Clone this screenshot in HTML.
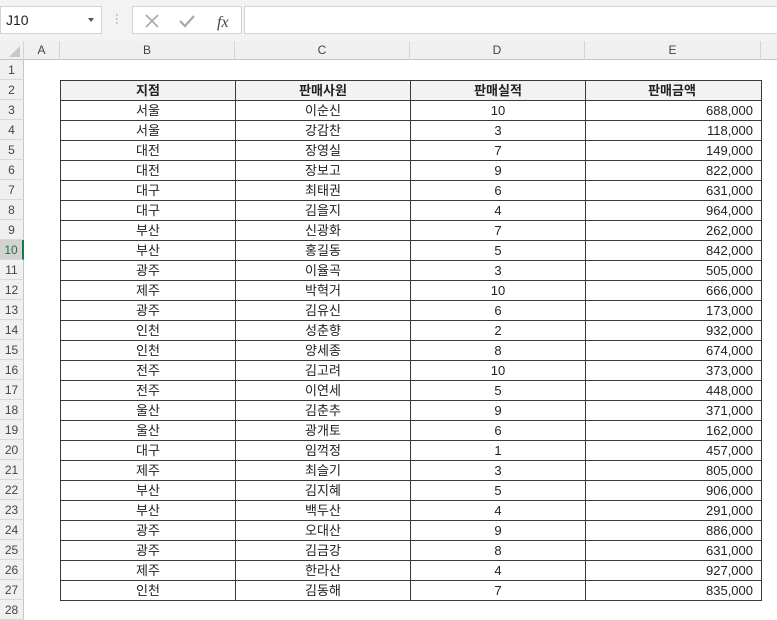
<!DOCTYPE html>
<html><head><meta charset="utf-8">
<style>
*{margin:0;padding:0;box-sizing:border-box}
body{width:777px;height:620px;background:#fff;position:relative;overflow:hidden;font-family:"Liberation Sans","Noto Sans CJK KR",sans-serif;color:#222}
.top{position:absolute;left:0;top:0;width:777px;height:41px;background:#f3f3f3}
.box{position:absolute;background:#fff;border:1px solid #d4d4d4}
.ch{position:absolute;top:41px;height:19px;background:#f0f0f0;border-right:1px solid #d4d4d4;border-bottom:1px solid #c6c6c6;font-size:12px;color:#444;text-align:center;line-height:18px}
.rh{position:absolute;left:0;width:24px;height:20px;background:#f0f0f0;border-bottom:1px solid #d8d8d8;border-right:1px solid #c6c6c6;font-size:12px;color:#444;text-align:center;line-height:20px}
table{position:absolute;left:60px;top:80px;border-collapse:collapse;font-size:13px}
td{height:20px;border:1px solid #3a3a3a;padding:0 5px;text-align:center;line-height:18px;color:#222}
td:nth-child(4){text-align:right;padding-right:8px}
tr.h td{background:#f2f2f2;font-weight:bold}
</style></head><body>
<div class="top"></div>
<div class="box" style="left:0;top:6px;width:102px;height:28px;font-size:14px;line-height:26px;padding-left:5px">J10<span style="position:absolute;right:7px;top:11px;width:0;height:0;border-left:3px solid transparent;border-right:3px solid transparent;border-top:4px solid #555"></span></div>
<div style="position:absolute;left:115px;top:13px;font-size:11px;color:#777;line-height:4px">·<br>·<br>·</div>
<div class="box" style="left:132px;top:6px;width:110px;height:28px">
<svg width="110" height="28" style="position:absolute;left:0;top:0">
<path d="M13 8 L25 20 M25 8 L13 20" stroke="#a8a8a8" stroke-width="1.6"/>
<path d="M47 14 L52 19 L61 9" stroke="#a8a8a8" stroke-width="2.2" fill="none"/>
<text x="84" y="20" font-family="Liberation Serif,serif" font-style="italic" font-size="16" fill="#444">fx</text>
</svg></div>
<div class="box" style="left:244px;top:6px;width:540px;height:28px"></div>
<div class="ch" style="left:0;width:24px"><svg width="24" height="19" style="position:absolute;left:0;top:0"><path d="M20 5 L20 16 L9 16 Z" fill="#c8c8c8"/></svg></div>
<div class="ch" style="left:24px;width:36px">A</div>
<div class="ch" style="left:60px;width:175px">B</div>
<div class="ch" style="left:235px;width:175px">C</div>
<div class="ch" style="left:410px;width:175px">D</div>
<div class="ch" style="left:585px;width:176px">E</div>
<div class="ch" style="left:761px;width:20px;border-right:none"></div>
<div class="rh" style="top:60px">1</div><div class="rh" style="top:80px">2</div><div class="rh" style="top:100px">3</div><div class="rh" style="top:120px">4</div><div class="rh" style="top:140px">5</div><div class="rh" style="top:160px">6</div><div class="rh" style="top:180px">7</div><div class="rh" style="top:200px">8</div><div class="rh" style="top:220px">9</div>
<div class="rh" style="top:240px;background:#d2d2d2;color:#217346;border-right:2px solid #217346">10</div>
<div class="rh" style="top:260px">11</div><div class="rh" style="top:280px">12</div><div class="rh" style="top:300px">13</div><div class="rh" style="top:320px">14</div><div class="rh" style="top:340px">15</div><div class="rh" style="top:360px">16</div><div class="rh" style="top:380px">17</div><div class="rh" style="top:400px">18</div><div class="rh" style="top:420px">19</div><div class="rh" style="top:440px">20</div><div class="rh" style="top:460px">21</div><div class="rh" style="top:480px">22</div><div class="rh" style="top:500px">23</div><div class="rh" style="top:520px">24</div><div class="rh" style="top:540px">25</div><div class="rh" style="top:560px">26</div><div class="rh" style="top:580px">27</div><div class="rh" style="top:600px">28</div>
<table>
<colgroup><col style="width:175px"><col style="width:175px"><col style="width:175px"><col style="width:176px"></colgroup>
<tr class="h"><td>지점</td><td>판매사원</td><td>판매실적</td><td style="text-align:center">판매금액</td></tr>
<tr><td>서울</td><td>이순신</td><td>10</td><td>688,000</td></tr>
<tr><td>서울</td><td>강감찬</td><td>3</td><td>118,000</td></tr>
<tr><td>대전</td><td>장영실</td><td>7</td><td>149,000</td></tr>
<tr><td>대전</td><td>장보고</td><td>9</td><td>822,000</td></tr>
<tr><td>대구</td><td>최태권</td><td>6</td><td>631,000</td></tr>
<tr><td>대구</td><td>김을지</td><td>4</td><td>964,000</td></tr>
<tr><td>부산</td><td>신광화</td><td>7</td><td>262,000</td></tr>
<tr><td>부산</td><td>홍길동</td><td>5</td><td>842,000</td></tr>
<tr><td>광주</td><td>이율곡</td><td>3</td><td>505,000</td></tr>
<tr><td>제주</td><td>박혁거</td><td>10</td><td>666,000</td></tr>
<tr><td>광주</td><td>김유신</td><td>6</td><td>173,000</td></tr>
<tr><td>인천</td><td>성춘향</td><td>2</td><td>932,000</td></tr>
<tr><td>인천</td><td>양세종</td><td>8</td><td>674,000</td></tr>
<tr><td>전주</td><td>김고려</td><td>10</td><td>373,000</td></tr>
<tr><td>전주</td><td>이연세</td><td>5</td><td>448,000</td></tr>
<tr><td>울산</td><td>김춘추</td><td>9</td><td>371,000</td></tr>
<tr><td>울산</td><td>광개토</td><td>6</td><td>162,000</td></tr>
<tr><td>대구</td><td>임꺽정</td><td>1</td><td>457,000</td></tr>
<tr><td>제주</td><td>최슬기</td><td>3</td><td>805,000</td></tr>
<tr><td>부산</td><td>김지혜</td><td>5</td><td>906,000</td></tr>
<tr><td>부산</td><td>백두산</td><td>4</td><td>291,000</td></tr>
<tr><td>광주</td><td>오대산</td><td>9</td><td>886,000</td></tr>
<tr><td>광주</td><td>김금강</td><td>8</td><td>631,000</td></tr>
<tr><td>제주</td><td>한라산</td><td>4</td><td>927,000</td></tr>
<tr><td>인천</td><td>김동해</td><td>7</td><td>835,000</td></tr>
</table>
</body></html>
